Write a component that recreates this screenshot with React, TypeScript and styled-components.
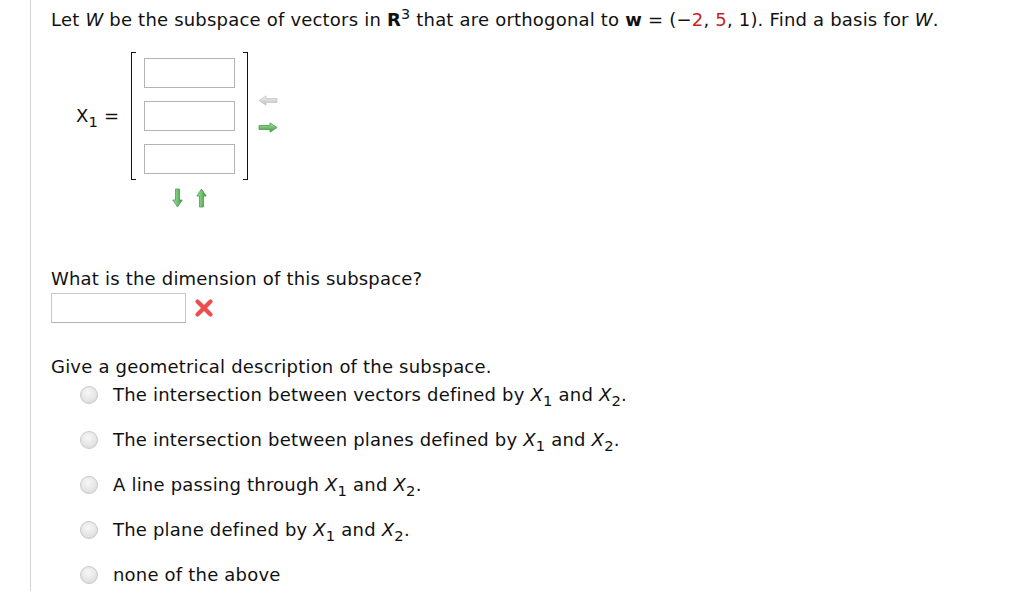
import React from 'react';
import styled, { createGlobalStyle } from 'styled-components';

const GlobalStyle = createGlobalStyle`
  html, body {
    margin: 0;
    padding: 0;
    background: #fff;
  }
  body {
    font-family: "DejaVu Sans", Verdana, sans-serif;
    color: #111;
  }
`;

const Page = styled.div`
  margin-left: 30px;
  border-left: 1px solid #d4d4d4;
  min-height: 591px;
  padding: 10px 0 0 20px;
  box-sizing: border-box;
  font-size: 18px;
  letter-spacing: 0.2px;
`;

const Line = styled.div<{ $top?: number }>`
  line-height: 20px;
  margin-top: ${(p) => p.$top ?? 0}px;
  white-space: nowrap;
`;

const Red = styled.span`
  color: #cc1f1f;
`;

const Sup = styled.sup`
  font-size: 0.8em;
  vertical-align: 0.5em;
  line-height: 0;
`;

const Sub = styled.sub`
  font-size: 0.82em;
  vertical-align: -0.32em;
  line-height: 0;
  font-style: normal;
`;

const MatrixBlock = styled.div`
  margin-top: 22px;
  display: flex;
  align-items: flex-start;
`;

const Label = styled.div`
  width: 80px;
  padding-left: 25px;
  box-sizing: border-box;
  line-height: 20px;
  margin-top: 54px;
  white-space: nowrap;
`;

const MatrixColumn = styled.div`
  display: flex;
  flex-direction: column;
  align-items: center;
  gap: 8px;
`;

const MatrixRow = styled.div`
  display: flex;
  align-items: center;
`;

const Bracket = styled.div<{ $side: 'left' | 'right' }>`
  width: 4px;
  height: 126px;
  border: 1.5px solid #111;
  border-${(p) => (p.$side === 'left' ? 'right' : 'left')}: none;
`;

const Cells = styled.div`
  display: flex;
  flex-direction: column;
  gap: 13px;
  padding: 0 8px;
`;

const Cell = styled.div`
  width: 89px;
  height: 28px;
  border: 1px solid #b4b4b4;
  background: #fff;
`;

const SideArrows = styled.div`
  display: flex;
  flex-direction: column;
  gap: 16px;
  margin-left: 10px;
  margin-top: 43px;
`;

const BottomArrows = styled.div`
  display: flex;
  gap: 13px;
`;

const AnswerInput = styled.div`
  width: 133px;
  height: 28px;
  border: 1px solid #c8c8c8;
  border-bottom-color: #b0b0b0;
`;

const AnswerRow = styled.div`
  display: flex;
  align-items: center;
  gap: 8px;
  margin-top: 4px;
`;

const Options = styled.div`
  display: flex;
  flex-direction: column;
  gap: 25px;
  margin-top: 8px;
  padding-left: 29px;
`;

const Option = styled.div`
  display: flex;
  align-items: center;
  gap: 15px;
  line-height: 20px;
  white-space: nowrap;
`;

const Radio = styled.span`
  width: 16px;
  height: 16px;
  border-radius: 50%;
  border: 1px solid #c9c9c9;
  background: radial-gradient(circle at 45% 35%, #f7f7f7 0%, #e6e6e6 55%, #d2d2d2 100%);
  flex-shrink: 0;
`;

type Dir = 'left' | 'right' | 'up' | 'down';

const arrowPaths: Record<Dir, string> = {
  right: 'M1 3.5 H12 V0.8 L19 5.5 L12 10.2 V7.5 H1 Z',
  left: 'M19 3.5 H8 V0.8 L1 5.5 L8 10.2 V7.5 H19 Z',
  down: 'M3.5 1 V12 H0.8 L5.5 19 L10.2 12 H7.5 V1 Z',
  up: 'M3.5 19 V8 H0.8 L5.5 1 L10.2 8 H7.5 V19 Z',
};

function Arrow({ dir, tone }: { dir: Dir; tone: 'green' | 'gray' }) {
  const id = `g-${dir}-${tone}`;
  const light = tone === 'green' ? '#a6e8a6' : '#f4f4f4';
  const dark = tone === 'green' ? '#3a9a3a' : '#bdbdbd';
  const stroke = tone === 'green' ? '#4c9c4c' : '#c6c6c6';
  const horizontal = dir === 'left' || dir === 'right';
  return (
    <svg width={horizontal ? 20 : 11} height={horizontal ? 11 : 20} viewBox={horizontal ? '0 0 20 11' : '0 0 11 20'}>
      <defs>
        <linearGradient id={id} x1="0" y1="0" x2={horizontal ? '0' : '1'} y2={horizontal ? '1' : '0'}>
          <stop offset="0" stopColor={light} />
          <stop offset="1" stopColor={dark} />
        </linearGradient>
      </defs>
      <path d={arrowPaths[dir]} fill={`url(#${id})`} stroke={stroke} strokeWidth="0.8" />
    </svg>
  );
}

function WrongMark() {
  return (
    <svg width="20" height="20" viewBox="0 0 20 20">
      <g stroke="#ee4d4d" strokeWidth="4.2" strokeLinecap="round">
        <line x1="3.5" y1="3.5" x2="16.5" y2="16.5" />
        <line x1="16.5" y1="3.5" x2="3.5" y2="16.5" />
      </g>
    </svg>
  );
}

const X1 = ({ italic = true }: { italic?: boolean }) => (
  <span>
    {italic ? <i>X</i> : 'X'}
    <Sub>1</Sub>
  </span>
);

const X2 = () => (
  <span>
    <i>X</i>
    <Sub>2</Sub>
  </span>
);

const options: React.ReactNode[] = [
  <>The intersection between vectors defined by <X1 /> and <X2 />.</>,
  <>The intersection between planes defined by <X1 /> and <X2 />.</>,
  <>A line passing through <X1 /> and <X2 />.</>,
  <>The plane defined by <X1 /> and <X2 />.</>,
  <>none of the above</>,
];

export default function App() {
  return (
    <>
      <GlobalStyle />
      <Page>
        <Line>
          Let <i>W</i> be the subspace of vectors in <b>R</b>
          <Sup>3</Sup> that are orthogonal to <b>w</b> = (−<Red>2</Red>, <Red>5</Red>, 1). Find a basis for <i>W</i>.
        </Line>

        <MatrixBlock>
          <Label>
            <X1 italic={false} /> =
          </Label>
          <MatrixColumn>
            <MatrixRow>
              <Bracket $side="left" />
              <Cells>
                <Cell />
                <Cell />
                <Cell />
              </Cells>
              <Bracket $side="right" />
            </MatrixRow>
            <BottomArrows>
              <Arrow dir="down" tone="green" />
              <Arrow dir="up" tone="green" />
            </BottomArrows>
          </MatrixColumn>
          <SideArrows>
            <Arrow dir="left" tone="gray" />
            <Arrow dir="right" tone="green" />
          </SideArrows>
        </MatrixBlock>

        <Line $top={61}>What is the dimension of this subspace?</Line>
        <AnswerRow>
          <AnswerInput />
          <WrongMark />
        </AnswerRow>

        <Line $top={34}>Give a geometrical description of the subspace.</Line>
        <Options>
          {options.map((o, i) => (
            <Option key={i}>
              <Radio />
              <span>{o}</span>
            </Option>
          ))}
        </Options>
      </Page>
    </>
  );
}
